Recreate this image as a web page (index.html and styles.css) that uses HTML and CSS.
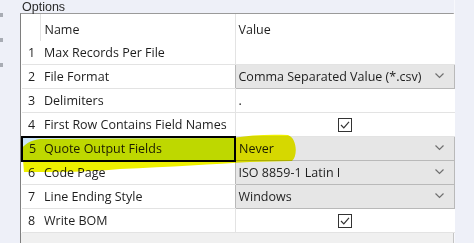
FILE: index.html
```html
<!DOCTYPE html>
<html lang="en">
<head>
<meta charset="UTF-8">
<title>Options</title>
<link rel="stylesheet" href="styles.css">
</head>
<body>

<div class="page">
    <div class="grip"><span></span><span></span><span></span></div>
    <div class="options">
        <div class="legend">Options</div>
        <div class="grid">
            <table>
                <tr class="head">
                    <td class="num"></td>
                    <td class="name">Name</td>
                    <td class="val">Value</td>
                </tr>
                <tr>
                    <td class="num">1</td>
                    <td class="name">Max Records Per File</td>
                    <td class="val"></td>
                </tr>
                <tr>
                    <td class="num">2</td>
                    <td class="name">File Format</td>
                    <td class="val combo"><span>Comma Separated Value (*.csv)</span><svg class="chev" width="9" height="6" viewBox="0 0 9 6"><path d="M0.5 0.5 L4.5 4.5 L8.5 0.5" fill="none" stroke="#707070" stroke-width="1.2"/></svg></td>
                </tr>
                <tr>
                    <td class="num">3</td>
                    <td class="name">Delimiters</td>
                    <td class="val">.</td>
                </tr>
                <tr>
                    <td class="num">4</td>
                    <td class="name">First Row Contains Field Names</td>
                    <td class="val check"><svg width="14" height="14" viewBox="0 0 14 14"><rect x="0.5" y="0.5" width="13" height="13" fill="#fff" stroke="#333"/><path d="M3 7 L5.8 9.8 L11 3.8" fill="none" stroke="#333" stroke-width="1.2"/></svg></td>
                </tr>
                <tr class="selected">
                    <td class="num">5</td>
                    <td class="name">Quote Output Fields</td>
                    <td class="val combo"><span>Never</span><svg class="chev" width="9" height="6" viewBox="0 0 9 6"><path d="M0.5 0.5 L4.5 4.5 L8.5 0.5" fill="none" stroke="#707070" stroke-width="1.2"/></svg></td>
                </tr>
                <tr>
                    <td class="num">6</td>
                    <td class="name">Code Page</td>
                    <td class="val combo"><span>ISO 8859-1 Latin I</span><svg class="chev" width="9" height="6" viewBox="0 0 9 6"><path d="M0.5 0.5 L4.5 4.5 L8.5 0.5" fill="none" stroke="#707070" stroke-width="1.2"/></svg></td>
                </tr>
                <tr>
                    <td class="num">7</td>
                    <td class="name">Line Ending Style</td>
                    <td class="val combo"><span>Windows</span><svg class="chev" width="9" height="6" viewBox="0 0 9 6"><path d="M0.5 0.5 L4.5 4.5 L8.5 0.5" fill="none" stroke="#707070" stroke-width="1.2"/></svg></td>
                </tr>
                <tr>
                    <td class="num">8</td>
                    <td class="name">Write BOM</td>
                    <td class="val check"><svg width="14" height="14" viewBox="0 0 14 14"><rect x="0.5" y="0.5" width="13" height="13" fill="#fff" stroke="#333"/><path d="M3 7 L5.8 9.8 L11 3.8" fill="none" stroke="#333" stroke-width="1.2"/></svg></td>
                </tr>
            </table>
        </div>
    </div>
</div>

<!-- highlighter stroke drawn over the screenshot -->
<svg class="marker" width="474" height="243" viewBox="0 0 474 243">
    <path d="M22 148 C26 143 32 140 40 139 L232 138 C250 135 270 134 288 135 C297 138 298 156 292 161 L250 162 C215 164 170 167 120 169 C90 172 60 172 24 172 Z" fill="#eef000"/>
</svg>

</body>
</html>
```

FILE: styles.css
```css
body {
    margin: 0;
    padding: 0;
    background-color: #eef0f8;
    font-family: "Open Sans", "Noto Sans", Arial, sans-serif;
    font-size: 12.5px;
    color: #1e1e1e;
    position: relative;
    overflow: hidden;
    height: 243px;
}
.page {
    display: flex;
    height: 243px;
}
.grip {
    width: 20px;
    display: flex;
    flex-direction: column;
    gap: 21px;
    padding-top: 13px;
}
.grip span {
    display: block;
    width: 3px;
    height: 4px;
    background-color: #a8acb4;
}
.options {
    width: 434px;
    border-right: 1px solid #f7f8fc;
}
.legend {
    height: 13px;
    line-height: 14px;
    padding-left: 2px;
    font-family: "Liberation Sans", Arial, sans-serif;
    color: #2a2a2a;
}
.grid {
    height: 230px;
    background-color: #f0f0f0;
    border-top: 1px solid #9a9a9a;
    border-left: 1px solid #7e7e7e;
    border-right: 1px solid #c4c4c4;
}
table {
    border-collapse: collapse;
    table-layout: fixed;
    width: 434px;
    background-color: #fff;
}
td {
    height: 23px;
    padding: 0;
    border-bottom: 1px solid #e3e3e3;
    white-space: nowrap;
    overflow: hidden;
}
tr.head td {
    height: 24px;
    border-bottom: 0;
    padding-top: 3px;
}
.num {
    width: 18px;
    padding-left: 6px;
    box-sizing: border-box;
}
tr.head .num {
    border-right: 1px solid #e3e3e3;
}
.name {
    width: 195px;
    padding-left: 4px;
    box-sizing: border-box;
}
.val {
    border-left: 1px solid #e3e3e3;
    padding-left: 3px;
}
.combo {
    background-color: #e6e6e6;
    border: 1px solid #b9b9b9;
}
.combo span {
    display: inline-block;
}
.chev {
    float: right;
    margin-right: 10px;
    margin-top: 5px;
}
.check {
    text-align: center;
    padding-left: 0;
    line-height: 0;
}
.check svg {
    vertical-align: middle;
}
tr.selected .num {
    background-color: #cce6fa;
    border: 2px solid #000;
    border-right: 0;
}
tr.selected .name {
    background-color: #cce6fa;
    border: 2px solid #000;
    border-left: 0;
}
.marker {
    position: absolute;
    left: 0;
    top: 0;
    pointer-events: none;
    mix-blend-mode: multiply;
}
```
